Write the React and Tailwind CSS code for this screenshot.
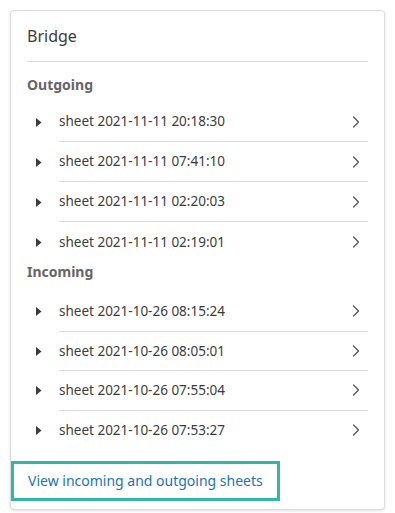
import { ChevronRight } from 'lucide-react';

const outgoing = [
    'sheet 2021-11-11 20:18:30',
    'sheet 2021-11-11 07:41:10',
    'sheet 2021-11-11 02:20:03',
    'sheet 2021-11-11 02:19:01',
];

const incoming = [
    'sheet 2021-10-26 08:15:24',
    'sheet 2021-10-26 08:05:01',
    'sheet 2021-10-26 07:55:04',
    'sheet 2021-10-26 07:53:27',
];

function SheetRow({ name, last, tall }) {
    return (
        <div className={`flex items-center ${tall ? 'h-10' : 'h-[39.5px]'}`}>
            <div className="w-8 flex">
                <svg className="ml-[8px]" width="7" height="11" viewBox="0 0 7 11">
                    <path d="M1 1 L6.5 5.5 L1 10 Z" fill="#3c3c3c" />
                </svg>
            </div>
            <div className={`flex-1 flex items-center h-full ${last ? '' : 'border-b border-[#dcdcdc]'}`}>
                <span className="flex-1 text-[13.5px] text-[#3c3c3c]">{name}</span>
                <ChevronRight className="w-5 h-5 text-[#555] mr-[2px]" strokeWidth={1.5} />
            </div>
        </div>
    );
}

function Section({ title, items, tall }) {
    return (
        <div>
            <h3 className="text-[14px] font-bold text-[#666] leading-5">{title}</h3>
            <div className={tall ? 'mt-[7px]' : 'mt-[10px]'}>
                {items.map((name, i) => (
                    <SheetRow key={name} name={name} tall={tall} last={i === items.length - 1} />
                ))}
            </div>
        </div>
    );
}

export default function App() {
    return (
        <div className="bg-white min-h-screen p-[10px]" style={{ fontFamily: '"Noto Sans", sans-serif' }}>
            <div className="w-[375px] bg-white rounded border border-[#dcdcdc] shadow-[0_1px_3px_rgba(0,0,0,0.12)] overflow-hidden">
                <div className="px-4">
                    <h2 className="text-[16px] text-[#3c3c3c] pt-[14px] pb-[14px] leading-[22px]">Bridge</h2>
                    <div className="border-t border-[#dcdcdc] pt-[13px]">
                        <Section title="Outgoing" items={outgoing} tall />
                        <Section title="Incoming" items={incoming} />
                    </div>
                </div>
                <div className="mt-[11px] mb-2">
                    <a className="inline-block border-[3px] border-[#2fb8a7] px-[14px] py-[7px] text-[14px] leading-5 text-[#1a74b6]">
                        View incoming and outgoing sheets
                    </a>
                </div>
            </div>
        </div>
    );
}
